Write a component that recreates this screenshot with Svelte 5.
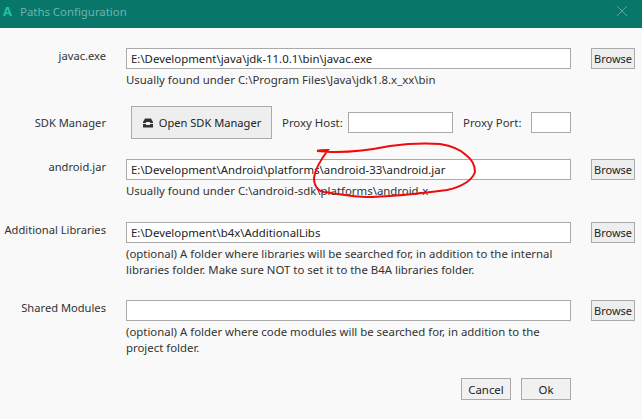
<script>
    const font = "Noto Sans"
    const sections = [
        { label: "javac.exe", value: "E:\\Development\\java\\jdk-11.0.1\\bin\\javac.exe", hint: ["Usually found under C:\\Program Files\\Java\\jdk1.8.x_xx\\bin"], gap: 18 },
        { label: "android.jar", value: "E:\\Development\\Android\\platforms\\android-33\\android.jar", hint: ["Usually found under C:\\android-sdk\\platforms\\android-x"], gap: 23 },
        { label: "Additional Libraries", value: "E:\\Development\\b4x\\AdditionalLibs", hint: ["(optional) A folder where libraries will be searched for, in addition to the internal", "libraries folder. Make sure NOT to set it to the B4A libraries folder."], gap: 22 },
        { label: "Shared Modules", value: "", hint: ["(optional) A folder where code modules will be searched for, in addition to the", "project folder."], gap: 0 }
    ]
</script>

<div class="dialog" style="font-family: '{font}', sans-serif">
    <header class="titlebar">
        <span class="logo">A</span>
        <span class="title">Paths Configuration</span>
        <svg class="close" width="12" height="12" viewBox="0 0 12 12"><path d="M1 1 L11 11 M11 1 L1 11" stroke="#5fa89f" stroke-width="1" fill="none" /></svg>
    </header>

    <main class="content">
        {#each sections as s, i}
            <section class="row" style="margin-bottom: {s.gap}px">
                <div class="label">{s.label}</div>
                <div class="field">
                    <input type="text" value={s.value} />
                    {#each s.hint as line}
                        <div class="hint">{line}</div>
                    {/each}
                </div>
                <button class="browse">Browse</button>
            </section>

            {#if i === 0}
                <section class="row sdk">
                    <div class="label">SDK Manager</div>
                    <div class="sdk-tools">
                        <button class="open-sdk">
                            <svg width="12" height="10" viewBox="0 0 12 10"><path d="M3 0.5 H9 L11 4 V5 H8 V4 H4 V5 H1 V4 Z M1 6 H4 V7 H8 V6 H11 V9.5 H1 Z" fill="#333" /></svg>
                            Open SDK Manager
                        </button>
                        <span class="proxy-label host">Proxy Host:</span>
                        <input class="host-input" type="text" />
                        <span class="proxy-label port">Proxy Port:</span>
                        <input class="port-input" type="text" />
                    </div>
                </section>
            {/if}
        {/each}

        <footer class="actions">
            <button class="action">Cancel</button>
            <button class="action">Ok</button>
        </footer>
    </main>

    <svg class="scribble" width="642" height="419" viewBox="0 0 642 419">
        <path d="M317 151 C320 150 325 150 328 150 C322 158 315 168 314 178 C314 186 318 191 324 192 C340 194 355 198 372 197 C395 196 425 193 447 190 C460 187 472 181 475 172 C475 164 470 158 466 155 C460 149 452 146 440 144 C425 143 405 144 390 146 C375 149 355 152 336 152 C328 152 322 151 317 151" fill="none" stroke="#f00a0a" stroke-width="2" />
    </svg>
</div>

<style>
    :global(body) {
        margin: 0;
        background: #f9f9f9;
    }

    .dialog {
        position: relative;
        width: 642px;
        height: 419px;
        background: #f9f9f9;
        color: #333;
        font-size: 11.4px;
        overflow: hidden;
    }

    .titlebar {
        box-sizing: border-box;
        height: 28px;
        background: #08776a;
        display: flex;
        align-items: center;
        padding: 0 14px 6px 3px;
    }

    .logo {
        font-size: 13px;
        font-weight: 700;
        color: #1fc1a9;
        width: 17px;
    }

    .title {
        color: #6fb3aa;
        font-size: 11.4px;
    }

    .close {
        margin-left: auto;
    }

    .content {
        padding-top: 20px;
        display: flex;
        flex-direction: column;
    }

    .row {
        display: flex;
        align-items: flex-start;
    }

    .label {
        width: 106px;
        display: flex;
        justify-content: flex-end;
        line-height: 15px;
        font-size: 11.15px;
        white-space: nowrap;
        flex: none;
    }

    .field {
        margin-left: 20px;
        width: 445px;
        flex: none;
    }

    input {
        display: block;
        box-sizing: border-box;
        width: 100%;
        height: 21px;
        border: 1px solid #aaa;
        border-radius: 0;
        background: #fff;
        padding: 0 4px;
        font: inherit;
        color: #222;
        outline: none;
    }

    .hint {
        line-height: 16px;
        color: #333;
        white-space: nowrap;
    }

    .field input + .hint {
        margin-top: 3px;
    }

    button {
        font: inherit;
        color: #222;
        background: #eee;
        border: 1px solid #aaa;
        border-radius: 0;
        padding: 0;
    }

    .browse {
        width: 44px;
        height: 21px;
        margin-left: 20px;
        font-size: 11px;
        flex: none;
    }

    .sdk {
        align-items: center;
        height: 33px;
        margin-bottom: 20px;
    }

    .sdk .label {
        line-height: 33px;
    }

    .sdk-tools {
        display: flex;
        align-items: center;
        margin-left: 25px;
    }

    .open-sdk {
        box-sizing: border-box;
        width: 141px;
        height: 33px;
        display: flex;
        align-items: center;
        justify-content: center;
        gap: 5px;
        font-size: 11.1px;
    }

    .proxy-label {
        white-space: nowrap;
    }

    .host {
        margin-left: 10px;
        width: 66px;
    }

    .host-input {
        width: 105px;
    }

    .port {
        margin-left: 10px;
        width: 68px;
    }

    .port-input {
        width: 40px;
    }

    .actions {
        display: flex;
        gap: 10px;
        margin-top: 22px;
        margin-left: 461px;
    }

    .action {
        width: 50px;
        height: 22px;
        background: #f1f1f1;
    }

    .scribble {
        position: absolute;
        left: 0;
        top: 0;
        pointer-events: none;
    }
</style>
